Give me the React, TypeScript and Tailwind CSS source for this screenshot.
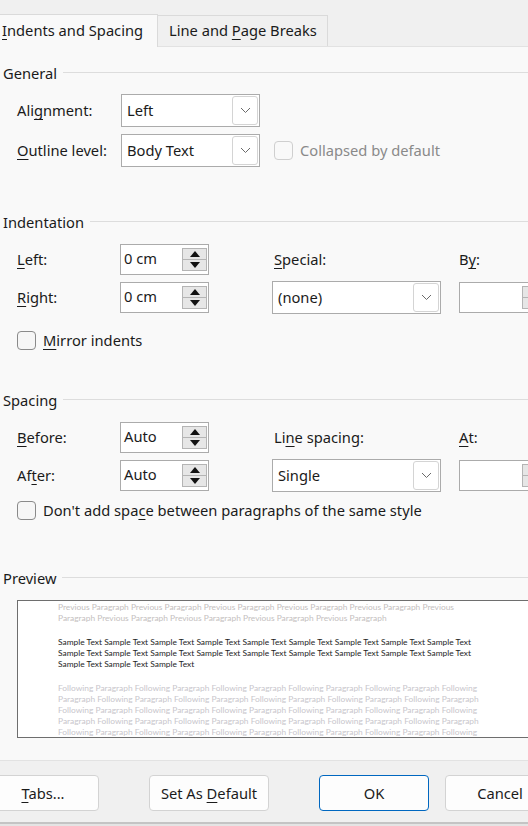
import React from "react";

function U({ children }: { children: React.ReactNode }) {
  return <span className="underline decoration-1 underline-offset-[3px]">{children}</span>;
}

function Heading({ children }: { children: React.ReactNode }) {
  return (
    <div className="flex h-5 items-center pl-[3px]">
      <span className="whitespace-nowrap">{children}</span>
      <div className="ml-[6px] mt-[-2px] h-px flex-1 bg-[#dddddd]" />
    </div>
  );
}

function Chevron() {
  return (
    <svg width="11" height="7" viewBox="0 0 11 7" fill="none">
      <polyline points="1,1 5.5,5.5 10,1" stroke="#6a6a6a" strokeWidth="1" />
    </svg>
  );
}

function Select({ value, w }: { value: string; w: string }) {
  return (
    <div className={`flex h-[33px] shrink-0 items-center border border-[#ababab] bg-white p-[1px] ${w}`}>
      <span className="flex-1 pl-[4px] whitespace-nowrap">{value}</span>
      <div className="flex h-full w-[26px] items-center justify-center rounded-[3px] border border-[#d4d4d4] bg-white">
        <Chevron />
      </div>
    </div>
  );
}

function Tri({ up }: { up?: boolean }) {
  return (
    <svg width="10" height="6" viewBox="0 0 10 6">
      {up ? <polygon points="0,6 10,6 5,0" fill="#111" /> : <polygon points="0,0 10,0 5,6" fill="#111" />}
    </svg>
  );
}

function Spinner({ value, w, arrows = true }: { value: string; w: string; arrows?: boolean }) {
  return (
    <div className={`flex h-[31px] shrink-0 items-center border border-[#ababab] bg-white py-[3px] pr-[1px] ${w}`}>
      <span className="flex-1 self-start pl-[3px] leading-[20px] whitespace-nowrap">{value}</span>
      <div className="flex h-full w-[25px] flex-col border border-[#b4b4b4] bg-[#e6e6e6]">
        <div className="flex flex-1 items-center justify-center border-b border-[#b4b4b4]">{arrows && <Tri up />}</div>
        <div className="flex flex-1 items-center justify-center">{arrows && <Tri />}</div>
      </div>
    </div>
  );
}

function Check({ disabled }: { disabled?: boolean }) {
  return (
    <div
      className={`h-[19px] w-[19px] shrink-0 rounded-[4px] border ${
        disabled ? "border-[#cfcfcf] bg-[#f9f9f9]" : "border-[#8a8a8a] bg-[#f6f6f6]"
      }`}
    />
  );
}

function Btn({ children, w, primary }: { children: React.ReactNode; w: string; primary?: boolean }) {
  return (
    <div
      className={`flex h-[36px] shrink-0 items-center justify-center rounded-[4px] border bg-[#fdfdfd] ${w} ${
        primary ? "border-[#0067c0]" : "border-[#d3d3d3]"
      }`}
    >
      {children}
    </div>
  );
}

const prev1 = "Previous Paragraph Previous Paragraph Previous Paragraph Previous Paragraph Previous Paragraph Previous";
const prev2 = "Paragraph Previous Paragraph Previous Paragraph Previous Paragraph Previous Paragraph";
const samp9 = Array(9).fill("Sample Text").join(" ");
const samp3 = Array(3).fill("Sample Text").join(" ");
const fol1 = "Following Paragraph Following Paragraph Following Paragraph Following Paragraph Following Paragraph Following";
const fol2 = "Paragraph Following Paragraph Following Paragraph Following Paragraph Following Paragraph Following Paragraph";

export default function App() {
  return (
    <div className="relative h-[826px] w-[528px] overflow-hidden bg-[#f0f0f0] font-['Segoe_UI','Noto_Sans',sans-serif] text-[14.7px] text-[#1b1b1b]">
      {/* Tabs */}
      <div className="flex h-[46px] items-end">
        <div className="z-10 mb-[-1px] flex h-[33px] w-[158px] items-center border-r border-t border-[#dadada] bg-[#f9f9f9] pl-[2px] pb-[2px]">
          <span className="whitespace-nowrap">
            <U>I</U>ndents and Spacing
          </span>
        </div>
        <div className="flex h-[31px] w-[170px] items-center border-r border-t border-[#dadada] bg-[#f0f0f0] pl-[11px] pb-[1px]">
          <span className="whitespace-nowrap">
            Line and <U>P</U>age Breaks
          </span>
        </div>
      </div>

      {/* Panel */}
      <div className="flex h-[715px] flex-col border-t border-b border-[#e2e2e2] bg-[#f9f9f9]">
        <div className="mt-[16px]">
          <Heading>General</Heading>
        </div>

        <div className="mt-[11px] flex items-center pl-[17px]">
          <span className="w-[104px] shrink-0">
            Ali<U>g</U>nment:
          </span>
          <Select value="Left" w="w-[139px]" />
        </div>
        <div className="mt-[7px] flex items-center pl-[17px]">
          <span className="w-[104px] shrink-0">
            <U>O</U>utline level:
          </span>
          <Select value="Body Text" w="w-[139px]" />
          <div className="ml-[14px] flex items-center gap-[7px] text-[#8a8a8a]">
            <Check disabled />
            <span className="whitespace-nowrap">Collapsed by default</span>
          </div>
        </div>

        <div className="mt-[45px]">
          <Heading>Indentation</Heading>
        </div>

        <div className="mt-[12px] flex h-[31px] items-center pl-[17px]">
          <span className="w-[103px] shrink-0">
            <U>L</U>eft:
          </span>
          <Spinner value="0 cm" w="w-[89px]" />
          <span className="ml-[65px] w-[185px] shrink-0">
            <U>S</U>pecial:
          </span>
          <span>
            B<U>y</U>:
          </span>
        </div>
        <div className="mt-[6px] flex h-[33px] items-center pl-[17px]">
          <span className="w-[103px] shrink-0">
            <U>R</U>ight:
          </span>
          <Spinner value="0 cm" w="w-[89px]" />
          <div className="ml-[63px]">
            <Select value="(none)" w="w-[169px]" />
          </div>
          <div className="ml-[18px]">
            <Spinner value="" w="w-[90px]" arrows={false} />
          </div>
        </div>

        <div className="mt-[16px] flex h-5 items-center gap-[7px] pl-[17px]">
          <Check />
          <span>
            <U>M</U>irror indents
          </span>
        </div>

        <div className="mt-[40px]">
          <Heading>Spacing</Heading>
        </div>

        <div className="mt-[12px] flex h-[31px] items-center pl-[17px]">
          <span className="w-[103px] shrink-0">
            <U>B</U>efore:
          </span>
          <Spinner value="Auto" w="w-[89px]" />
          <span className="ml-[65px] w-[185px] shrink-0">
            Li<U>n</U>e spacing:
          </span>
          <span>
            <U>A</U>t:
          </span>
        </div>
        <div className="mt-[6px] flex h-[33px] items-center pl-[17px]">
          <span className="w-[103px] shrink-0">
            Af<U>t</U>er:
          </span>
          <Spinner value="Auto" w="w-[89px]" />
          <div className="ml-[63px]">
            <Select value="Single" w="w-[169px]" />
          </div>
          <div className="ml-[18px]">
            <Spinner value="" w="w-[90px]" arrows={false} />
          </div>
        </div>

        <div className="mt-[8px] flex h-5 items-center gap-[7px] pl-[17px]">
          <Check />
          <span className="whitespace-nowrap">
            Don't add spa<U>c</U>e between paragraphs of the same style
          </span>
        </div>

        <div className="mt-[48px]">
          <Heading>Preview</Heading>
        </div>

        <div className="ml-[17px] mt-[12px] h-[138px] w-[530px] shrink-0 overflow-hidden border border-[#6e6e6e] bg-white pl-[40px] pt-[1px] font-['Lato',sans-serif] text-[8.4px] leading-[11px] whitespace-nowrap">
          <div className="text-[#c4c0c0]">
            <div>{prev1}</div>
            <div>{prev2}</div>
          </div>
          <div className="mt-[13px] text-[#1e1e1e]">
            <div>{samp9}</div>
            <div>{samp9}</div>
            <div>{samp3}</div>
          </div>
          <div className="mt-[13px] text-[#c8c6cc]">
            <div>{fol1}</div>
            <div>{fol2}</div>
            <div>{fol1}</div>
            <div>{fol2}</div>
            <div>{fol1}</div>
          </div>
        </div>
      </div>

      {/* Footer */}
      <div className="flex h-[61px] items-start bg-[#f0f0f0] pt-[14px] pl-0">
        <div className="ml-[-13px] flex gap-[50px]">
          <Btn w="w-[112px]">
            <span>
              <U>T</U>abs...
            </span>
          </Btn>
          <Btn w="w-[120px]">
            <span>
              Set As <U>D</U>efault
            </span>
          </Btn>
        </div>
        <div className="ml-[50px] flex gap-[16px]">
          <Btn w="w-[110px]" primary>
            OK
          </Btn>
          <Btn w="w-[110px]">Cancel</Btn>
        </div>
      </div>
      <div className="h-[2px] bg-[#c4c4c4]" />
      <div className="h-[2px] bg-[#e4e4e4]" />
    </div>
  );
}
